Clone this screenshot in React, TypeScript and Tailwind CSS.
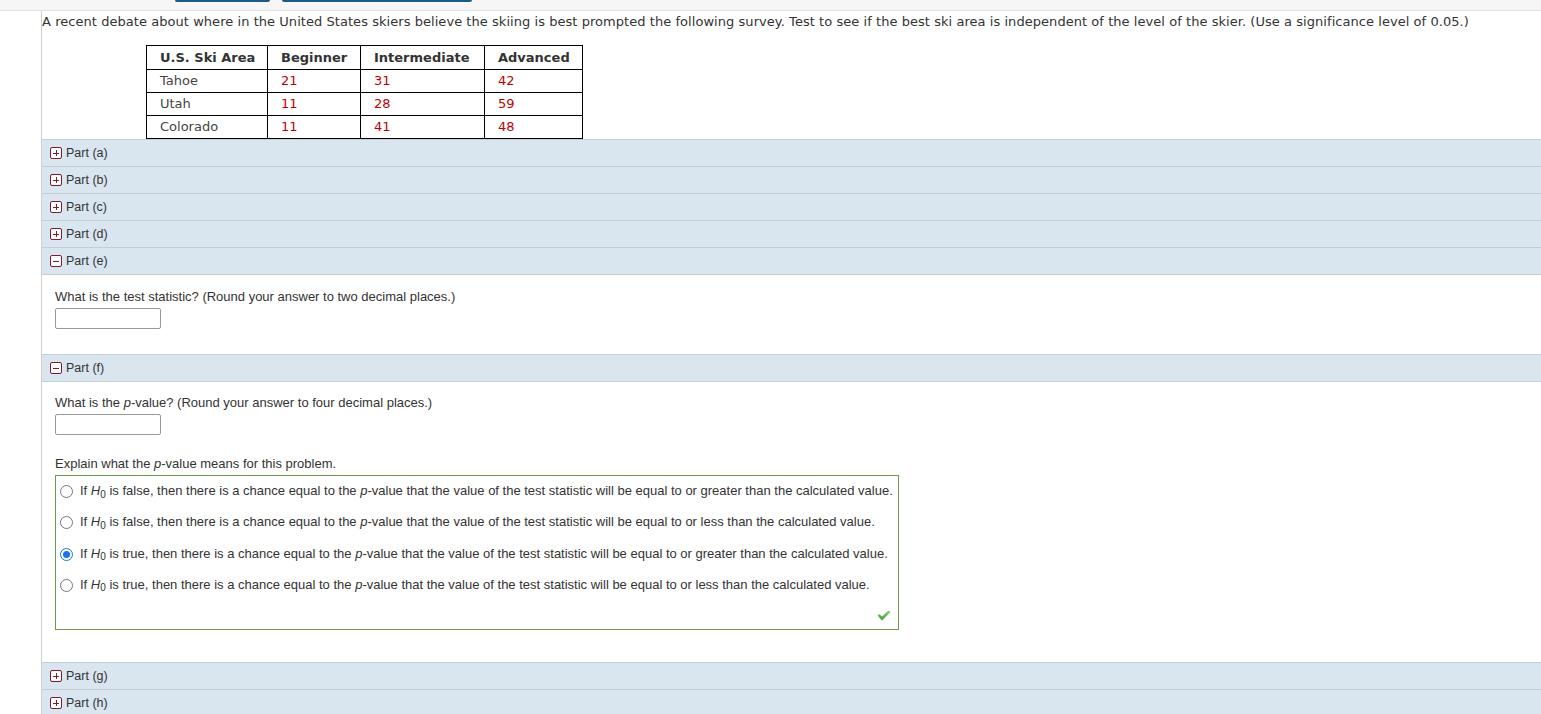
import React from 'react';

const rows = [
  { area: 'Tahoe', b: 21, i: 31, a: 42 },
  { area: 'Utah', b: 11, i: 28, a: 59 },
  { area: 'Colorado', b: 11, i: 41, a: 48 },
];

function Toggle({ open }: { open: boolean }) {
  return (
    <span className="relative inline-block w-[12px] h-[12px] border border-[#7b1e2e] rounded-[2px] bg-white mr-[4px]">
      <span className="absolute left-[2px] right-[2px] top-[4.5px] h-[1px] bg-[#7b1e2e]" />
      {!open && <span className="absolute top-[2px] bottom-[2px] left-[4.5px] w-[1px] bg-[#7b1e2e]" />}
    </span>
  );
}

function PartHeader({ label, open }: { label: string; open?: boolean }) {
  return (
    <div className="h-[27px] bg-[#d9e5ef] border-t border-[#c4ccd4] flex items-center pl-[8px] text-[12.5px] text-[#333] font-['Liberation_Sans',Arial,sans-serif]">
      <Toggle open={!!open} />
      <span>{label}</span>
    </div>
  );
}

function H0() {
  return (
    <>
      <i>H</i>
      <sub className="text-[10px]">0</sub>
    </>
  );
}

function Radio({ checked }: { checked?: boolean }) {
  if (checked) {
    return (
      <span className="inline-flex items-center justify-center w-[13px] h-[13px] rounded-full border-[1.5px] border-[#1a73e8] bg-white shrink-0">
        <span className="w-[7px] h-[7px] rounded-full bg-[#1a73e8]" />
      </span>
    );
  }
  return <span className="inline-block w-[13px] h-[13px] rounded-full border border-[#767676] bg-white shrink-0" />;
}

const options = [
  { t: 'false', cmp: 'greater than', checked: false },
  { t: 'false', cmp: 'less than', checked: false },
  { t: 'true', cmp: 'greater than', checked: true },
  { t: 'true', cmp: 'less than', checked: false },
];

export default function App() {
  return (
    <div className="min-h-screen bg-white overflow-hidden">
      {/* top strip */}
      <div className="h-[11px] bg-[#f6f6f6] border-b border-[#e2e2e2] flex items-start pl-[175px] gap-[12px]">
        <div className="w-[95px] h-[2px] bg-[#1d5b86] rounded-b-[2px]" />
        <div className="w-[190px] h-[2px] bg-[#1d5b86] rounded-b-[2px]" />
      </div>

      <div className="flex">
        <div className="w-[41px] shrink-0" />
        <div className="flex-1 border-l border-[#d0d0d0]">
          <p className="pt-[2px] leading-[18px] text-[13px] text-[#333] tracking-[0.05px] font-['DejaVu_Sans',Verdana,sans-serif]">
            A recent debate about where in the United States skiers believe the skiing is best prompted the following survey. Test to see if the best ski area is independent of the level of the skier. (Use a significance level of 0.05.)
          </p>

          <table className="ml-[104px] mt-[14px] border-collapse text-[13px] font-['DejaVu_Sans',Verdana,sans-serif]">
            <thead>
              <tr className="h-[24px]">
                <th className="w-[121px] border border-black text-left pl-[13px] font-bold text-[#333]">U.S. Ski Area</th>
                <th className="w-[93px] border border-black text-left pl-[13px] font-bold text-[#333]">Beginner</th>
                <th className="w-[124px] border border-black text-left pl-[13px] font-bold text-[#333]">Intermediate</th>
                <th className="w-[98px] border border-black text-left pl-[13px] font-bold text-[#333]">Advanced</th>
              </tr>
            </thead>
            <tbody>
              {rows.map((r) => (
                <tr key={r.area} className="h-[23px]">
                  <td className="border border-black pl-[13px] text-[#444]">{r.area}</td>
                  <td className="border border-black pl-[13px] text-[#c00000]">{r.b}</td>
                  <td className="border border-black pl-[13px] text-[#c00000]">{r.i}</td>
                  <td className="border border-black pl-[13px] text-[#c00000]">{r.a}</td>
                </tr>
              ))}
            </tbody>
          </table>

          <PartHeader label="Part (a)" />
          <PartHeader label="Part (b)" />
          <PartHeader label="Part (c)" />
          <PartHeader label="Part (d)" />
          <PartHeader label="Part (e)" open />

          <div className="h-[80px] border-t border-[#c4ccd4] pl-[13px] pt-[14px] font-['Liberation_Sans',Arial,sans-serif] text-[13px] text-[#333]">
            <p className="leading-[16px]">What is the test statistic? (Round your answer to two decimal places.)</p>
            <div className="mt-[3px] w-[106px] h-[21px] border border-[#999] rounded-[2px] bg-white" />
          </div>

          <PartHeader label="Part (f)" open />

          <div className="h-[281px] border-t border-[#c4ccd4] pl-[13px] pt-[13px] font-['Liberation_Sans',Arial,sans-serif] text-[13px] text-[#333]">
            <p className="leading-[16px]">
              What is the <i>p</i>-value? (Round your answer to four decimal places.)
            </p>
            <div className="mt-[3px] w-[106px] h-[21px] border border-[#999] rounded-[2px] bg-white" />

            <p className="mt-[21px] leading-[16px]">
              Explain what the <i>p</i>-value means for this problem.
            </p>
            <div className="mt-[3px] w-[844px] h-[155px] border border-[#6b9a4b] flex flex-col pt-[7px] pl-[4px] relative text-[13px]">
              {options.map((o, k) => (
                <div key={k} className="h-[31.3px] flex items-start gap-[7px] pt-[2px]">
                  <Radio checked={o.checked} />
                  <span className="leading-[14px] -mt-[1px]">
                    If <H0 /> is {o.t}, then there is a chance equal to the <i>p</i>-value that the value of the test statistic will be equal to or {o.cmp} the calculated value.
                  </span>
                </div>
              ))}
              <svg className="absolute right-[7px] bottom-[8px]" width="14" height="11" viewBox="0 0 14 11">
                <defs>
                  <linearGradient id="ck" x1="0" y1="0" x2="0" y2="1">
                    <stop offset="0" stopColor="#8fd27d" />
                    <stop offset="1" stopColor="#3f9a3a" />
                  </linearGradient>
                </defs>
                <path d="M0.5 5.5 L2.5 4 L5 6.5 L11.5 0.5 L13.5 2 L5 10.5 Z" fill="url(#ck)" />
              </svg>
            </div>
          </div>

          <PartHeader label="Part (g)" />
          <PartHeader label="Part (h)" />
        </div>
      </div>
    </div>
  );
}
